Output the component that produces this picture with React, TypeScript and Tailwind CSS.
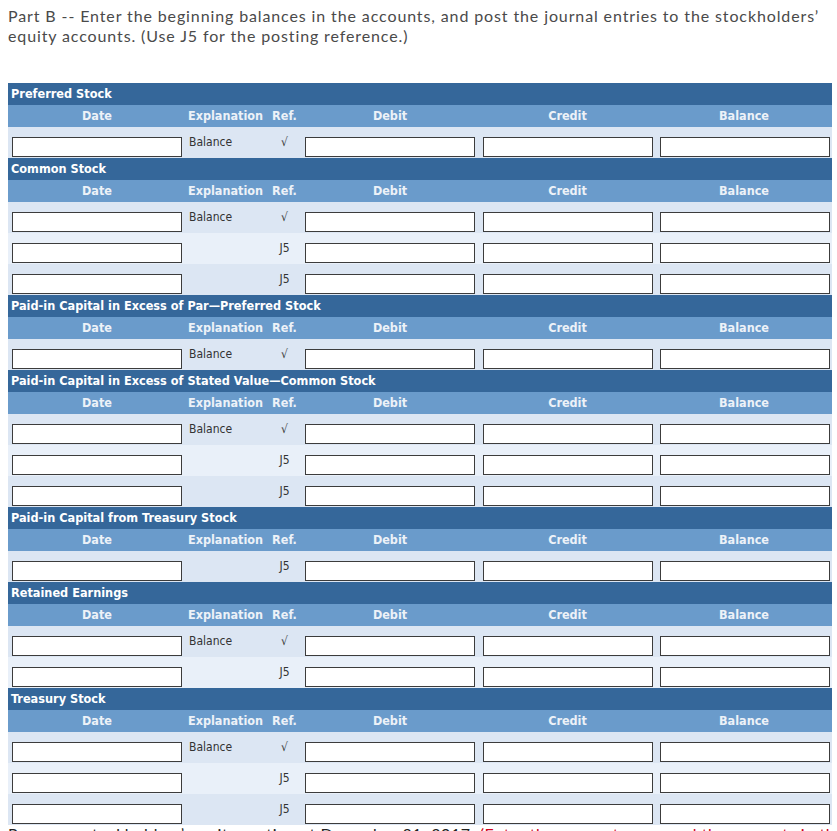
import React from "react";

type Section = {
  title: string;
  rows: ("balance" | "j5")[];
};

const sections: Section[] = [
  { title: "Preferred Stock", rows: ["balance"] },
  { title: "Common Stock", rows: ["balance", "j5", "j5"] },
  { title: "Paid-in Capital in Excess of Par\u2014Preferred Stock", rows: ["balance"] },
  { title: "Paid-in Capital in Excess of Stated Value\u2014Common Stock", rows: ["balance", "j5", "j5"] },
  { title: "Paid-in Capital from Treasury Stock", rows: ["j5"] },
  { title: "Retained Earnings", rows: ["balance", "j5"] },
  { title: "Treasury Stock", rows: ["balance", "j5", "j5"] },
];

const cols = "grid grid-cols-[178px_82px_33px_178px_177px_176px]";

const AmountInput = () => (
  <div className="px-[4px] pt-[10px]">
    <input
      type="text"
      className="block h-[20px] w-[170px] border border-[#3c3c3c] bg-white outline-none"
    />
  </div>
);

const LedgerRow = ({ kind, index }: { kind: "balance" | "j5"; index: number }) => {
  const bg = index % 2 === 0 ? "bg-[#dce6f3]" : "bg-[#e9f0f9]";
  return (
    <div className={`${cols} h-[31px] ${bg}`}>
      <AmountInput />
      <div className="pl-[3px] pt-[7px] leading-[16px] text-[#333]">
        {kind === "balance" ? "Balance" : ""}
      </div>
      <div className="pt-[7px] text-center leading-[16px] text-[#333]">
        {kind === "balance" ? "\u221A" : "J5"}
      </div>
      <AmountInput />
      <AmountInput />
      <AmountInput />
    </div>
  );
};

const Ledger = ({ section }: { section: Section }) => (
  <div>
    <div className="flex h-[22px] items-center bg-[#35679a] pl-[3px] text-[12.6px] font-bold text-white">
      {section.title}
    </div>
    <div className={`${cols} h-[22px] items-center bg-[#6a9bcb] text-[12.5px] font-bold text-[#edf2f8]`}>
      <div className="text-center">Date</div>
      <div className="pl-[2px]">Explanation</div>
      <div className="text-center">Ref.</div>
      <div className="text-center">Debit</div>
      <div className="text-center">Credit</div>
      <div className="text-center">Balance</div>
    </div>
    {section.rows.map((kind, i) => (
      <LedgerRow key={i} kind={kind} index={i} />
    ))}
  </div>
);

export default function App() {
  return (
    <div className="h-[831px] w-[837px] overflow-hidden bg-white px-[8px] pt-[6px]">
      <p className="font-['Lato','Open_Sans',sans-serif] text-[16px] leading-[20px] tracking-[0.88px] text-[#4a4a4a]">
        <span className="whitespace-nowrap">
          Part B -- Enter the beginning balances in the accounts, and post the journal entries to the stockholders&rsquo;
        </span>
        <br />
        <span className="whitespace-nowrap">equity accounts. (Use J5 for the posting reference.)</span>
      </p>

      <div className="mt-[37px] w-[824px] font-['DejaVu_Sans_Condensed','DejaVu_Sans',sans-serif] text-[12px]">
        {sections.map((s) => (
          <Ledger key={s.title} section={s} />
        ))}
      </div>

      <p className="whitespace-nowrap font-['Lato','Open_Sans',sans-serif] text-[16px] leading-[18px] tracking-[0.6px] text-[#222]">
        Prepare a stockholders&rsquo; equity section at December 31, 2017.{" "}
        <span className="text-[#d0021b]">(Enter the account name and the amounts in the order presented in the balance sheet.)</span>
      </p>
    </div>
  );
}
